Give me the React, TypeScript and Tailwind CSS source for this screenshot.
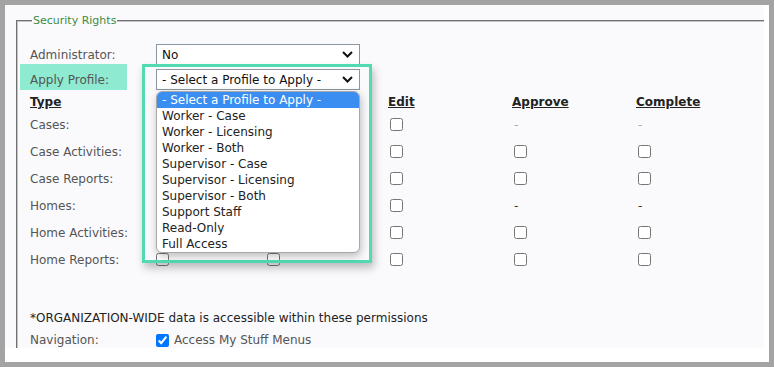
import React from "react";

const font = { fontFamily: '"DejaVu Sans", Verdana, sans-serif' };

const profiles = [
  "- Select a Profile to Apply -",
  "Worker - Case",
  "Worker - Licensing",
  "Worker - Both",
  "Supervisor - Case",
  "Supervisor - Licensing",
  "Supervisor - Both",
  "Support Staff",
  "Read-Only",
  "Full Access",
];

type Cell = "box" | "dash" | "darkdash";
const rows: { label: string; cells: Cell[] }[] = [
  { label: "Cases:", cells: ["box", "box", "box", "dash", "dash"] },
  { label: "Case Activities:", cells: ["box", "box", "box", "box", "box"] },
  { label: "Case Reports:", cells: ["box", "box", "box", "box", "box"] },
  { label: "Homes:", cells: ["box", "box", "box", "darkdash", "darkdash"] },
  { label: "Home Activities:", cells: ["box", "box", "box", "box", "box"] },
  { label: "Home Reports:", cells: ["box", "box", "box", "box", "box"] },
];

function Chevron() {
  return (
    <svg width="11" height="7" viewBox="0 0 11 7" className="shrink-0">
      <path d="M1 1 L5.5 5.5 L10 1" fill="none" stroke="#111" strokeWidth="2" />
    </svg>
  );
}

function FakeSelect({ value }: { value: string }) {
  return (
    <div className="ml-[2px] w-[204px] h-[21px] border border-[#8a96a3] bg-white flex items-center justify-between pl-[5px] pr-[6px] text-[#111]">
      <span>{value}</span>
      <Chevron />
    </div>
  );
}

function Box() {
  return (
    <input
      type="checkbox"
      readOnly
      className="m-0 ml-[2px] w-[13px] h-[13px] align-middle"
    />
  );
}

export default function App() {
  return (
    <div className="w-[774px] h-[367px] bg-[#a3a3a3] pt-[5px] pl-[5px]" style={font}>
      <div className="w-[764px] h-[357px] bg-white pr-[5px] pb-[14px]">
        <div className="h-full bg-[#fafafd] overflow-hidden pl-[11px] pt-[8px] text-[12px] leading-[16px] text-[#555]">
          <fieldset className="w-[760px] border-2 [border-style:groove] border-[#c4c4c4] pl-[12px] pb-[30px]">
            <legend className="ml-[2px] px-[1px] text-[11px] text-[#3d8b40] leading-[16px]">
              Security Rights
            </legend>

            <div className="relative pt-[15px]">
              {/* Administrator */}
              <div className="flex items-center h-[21px]">
                <div className="w-[124px]">Administrator:</div>
                <FakeSelect value="No" />
              </div>

              {/* Apply Profile */}
              <div className="flex items-end h-[26px] -mt-[1px]">
                <div className="w-[124px] h-[26px]">
                  <div className="-ml-[10px] pl-[10px] w-[107px] h-[26px] pt-[8px] bg-[#8eead1]">
                    Apply Profile:
                  </div>
                </div>
                <FakeSelect value="- Select a Profile to Apply -" />
              </div>

              {/* Header (first two column titles sit under the open list) */}
              <div className="grid grid-cols-[124px_111px_123px_124px_124px_1fr] h-[17px] mt-[4px] font-bold text-[#222] underline">
                <div>Type</div>
                <div />
                <div />
                <div>Edit</div>
                <div>Approve</div>
                <div>Complete</div>
              </div>

              {rows.map((r) => (
                <div
                  key={r.label}
                  className="grid grid-cols-[124px_111px_123px_124px_124px_1fr] h-[27px] items-center"
                >
                  <div>{r.label}</div>
                  {r.cells.map((c, i) => (
                    <div key={i} className="flex items-center">
                      {c === "box" ? (
                        <Box />
                      ) : (
                        <span
                          className={
                            c === "dash"
                              ? "ml-[2px] text-[#aaa]"
                              : "ml-[2px] text-[#333]"
                          }
                        >
                          -
                        </span>
                      )}
                    </div>
                  ))}
                </div>
              ))}

              <div className="mt-[37px] text-[#222]">
                *ORGANIZATION-WIDE data is accessible within these permissions
              </div>

              <div className="flex items-center h-[16px] mt-[6px]">
                <div className="w-[124px]">Navigation:</div>
                <input
                  type="checkbox"
                  readOnly
                  checked
                  className="m-0 ml-[2px] w-[13px] h-[13px]"
                />
                <span className="ml-[5px]">Access My Stuff Menus</span>
              </div>

              {/* highlight box */}
              <div className="absolute left-[112px] top-[35px] w-[230px] h-[199px] border-[3px] border-[#52dbb3] shadow-[2px_5px_8px_rgba(0,0,0,0.25)] pointer-events-none" />

              {/* open listbox */}
              <div className="absolute left-[126px] top-[62px] w-[204px] bg-white border border-[#a8a8a8] rounded-[6px] overflow-hidden shadow-[1px_3px_8px_rgba(0,0,0,0.25)] text-[12px] text-[#222]">
                {profiles.map((p, i) => (
                  <div
                    key={p}
                    className={
                      i === 0
                        ? "h-[16px] leading-[16px] pl-[5px] bg-[#3a8ef2] text-white"
                        : "h-[16px] leading-[16px] pl-[5px]"
                    }
                  >
                    {p}
                  </div>
                ))}
              </div>
            </div>
          </fieldset>
        </div>
      </div>
    </div>
  );
}
